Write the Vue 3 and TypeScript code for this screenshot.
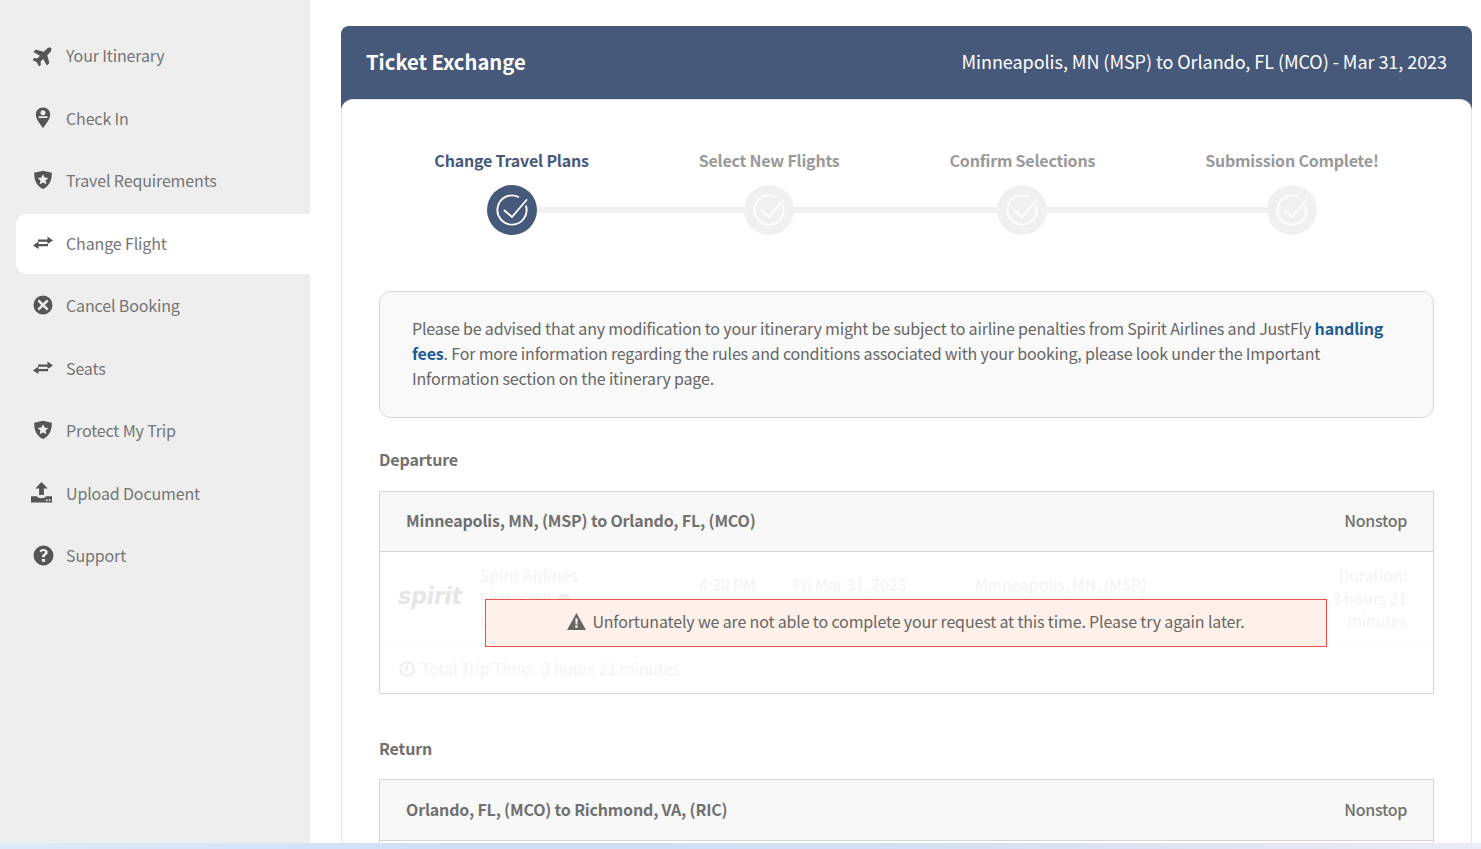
<script setup lang="ts">
type NavItem = { label: string; icon: string; active?: boolean }

const navItems: NavItem[] = [
  { label: 'Your Itinerary', icon: 'plane' },
  { label: 'Check In', icon: 'pin' },
  { label: 'Travel Requirements', icon: 'shield' },
  { label: 'Change Flight', icon: 'swap', active: true },
  { label: 'Cancel Booking', icon: 'cancel' },
  { label: 'Seats', icon: 'swap' },
  { label: 'Protect My Trip', icon: 'shield' },
  { label: 'Upload Document', icon: 'upload' },
  { label: 'Support', icon: 'help' },
]

const steps = [
  { label: 'Change Travel Plans', active: true },
  { label: 'Select New Flights', active: false },
  { label: 'Confirm Selections', active: false },
  { label: 'Submission Complete!', active: false },
]
</script>

<template>
  <div class="page">
    <aside class="sidebar">
      <a v-for="item in navItems" :key="item.label" :class="['nav_item', { active: item.active }]">
        <span class="nav_icon">
          <svg v-if="item.icon === 'plane'" width="23" height="23" viewBox="-22 -54 620 620">
            <path fill="#555" transform="rotate(-45 288 256)" d="M480 192H365.710L260.610 8.060A16.014 16.014 0 0 0 246.710 0h-65.500c-10.630 0-18.300 10.170-15.380 20.390L214.860 192H112l-43.200-57.600c-3.020-4.030-7.770-6.400-12.800-6.400H16.010C5.600 128-2.040 137.780.490 147.880L32 256 .490 364.120C-2.040 374.220 5.600 384 16.010 384H56c5.040 0 9.780-2.370 12.800-6.400L112 320h102.860l-49.030 171.600c-2.920 10.220 4.750 20.400 15.380 20.400h65.500c5.740 0 11.040-3.080 13.890-8.060L365.710 320H480c35.350 0 96-28.650 96-64s-60.650-64-96-64z" />
          </svg>
          <svg v-else-if="item.icon === 'pin'" width="22" height="22" viewBox="0 0 20 20">
            <path fill="#555" fill-rule="evenodd" d="M10 .500c-3.900 0-6.500 2.800-6.500 6.300 0 4 3.800 8.600 6.500 12.200 2.700-3.600 6.500-8.200 6.500-12.200 0-3.500-2.600-6.300-6.500-6.300zM10 3a2.300 2.300 0 1 1 0 4.600 2.300 2.300 0 0 1 0-4.600zM6 8.500h8V10H6z" />
          </svg>
          <svg v-else-if="item.icon === 'shield'" width="22" height="22" viewBox="0 0 20 20">
            <path fill="#555" fill-rule="evenodd" d="M10 1.500 2 3.400c-.2 6.300 1.800 11.800 8 14.800 6.200-3 8.200-8.500 8-14.800zM10 4.800l1.500 3 3.300.4-2.400 2.300.6 3.300-3-1.600-3 1.600.6-3.300-2.400-2.300 3.300-.4z" />
          </svg>
          <svg v-else-if="item.icon === 'swap'" width="20" height="20" viewBox="0 0 20 20">
            <path fill="#555" transform="translate(0 3)" d="M5 3.500h9.500V.5L20 4.500l-5.500 3.500V5.800H5zM15 8H5.500V5.500L0 9.500 5.500 13v-2.700H15z" />
          </svg>
          <svg v-else-if="item.icon === 'cancel'" width="20" height="20" viewBox="0 0 20 20">
            <path fill="#555" fill-rule="evenodd" d="M10 .500a9.500 9.500 0 1 0 0 19 9.500 9.500 0 0 0 0-19zM6.200 4.400 10 8.200l3.800-3.800 1.800 1.800L11.800 10l3.800 3.800-1.800 1.800L10 11.800l-3.800 3.800-1.800-1.800L8.200 10 4.400 6.200z" />
          </svg>
          <svg v-else-if="item.icon === 'upload'" class="upload_icon" width="23" height="21" viewBox="0 0 24 22">
            <path fill="#555" d="M12 0l6.500 6.800h-4v6.700h-5V6.800h-4zM1 15h6.200c.6 1.300 2 2 4.800 2s4.200-.7 4.800-2H23v6.500H1z" />
            <circle cx="17.500" cy="19" r="1" fill="#eee" />
            <circle cx="20.500" cy="19" r="1" fill="#eee" />
          </svg>
          <svg v-else width="21" height="21" viewBox="0 0 20 20">
            <path fill="#555" fill-rule="evenodd" d="M10 .500a9.500 9.500 0 1 0 0 19 9.500 9.500 0 0 0 0-19zM10 3.700c2.400 0 4 1.400 4 3.300 0 1.500-.9 2.200-1.800 2.800-.7.500-1 .8-1 1.400v.5H8.700v-.8c0-1.200.6-1.900 1.500-2.500.8-.5 1.200-.8 1.200-1.500 0-.7-.6-1.100-1.400-1.100-.9 0-1.500.5-2 1.300L6.100 5.600C7 4.400 8.200 3.700 10 3.700zM8.500 13.300h3v2.700h-3z" />
          </svg>
        </span>
        <span class="nav_label">{{ item.label }}</span>
      </a>
    </aside>

    <main class="content">
      <section class="card">
        <header class="card_head">
          <h1>Ticket Exchange</h1>
          <span>Minneapolis, MN (MSP) to Orlando, FL (MCO) - Mar 31, 2023</span>
        </header>

        <div class="card_body">
          <div class="steps_wrap">
            <div class="steps">
              <div class="track"></div>
              <div v-for="step in steps" :key="step.label" :class="['step', { active: step.active }]">
                <div class="step_label">{{ step.label }}</div>
                <div class="step_dot">
                  <svg width="34" height="34" viewBox="0 0 34 34" fill="none" stroke-width="1.900" stroke-linecap="round">
                    <path d="M31.100 13.200A14.600 14.600 0 1 1 23.200 3.800" />
                    <path d="M9.500 17.500 17 24 31.500 7" />
                  </svg>
                </div>
              </div>
            </div>
          </div>

          <div class="notice">
            Please be advised that any modification to your itinerary might be subject to airline penalties from Spirit Airlines and JustFly <a>handling</a> <a>fees</a>. For more information regarding the rules and conditions associated with your booking, please look under the Important Information section on the itinerary page.
          </div>

          <h2 class="leg_title">Departure</h2>
          <div class="leg">
            <div class="leg_head">
              <span>Minneapolis, MN, (MSP) to Orlando, FL, (MCO)</span>
              <span class="stops">Nonstop</span>
            </div>
            <div class="leg_body">
              <div class="faded">
                <div class="flight_row">
                  <div class="logo">spirit</div>
                  <div class="airline">
                    Spirit Airlines<br />
                    Flight 259
                    <svg width="14" height="14" viewBox="0 0 14 14" fill="#eeeeee"><circle cx="7" cy="7" r="6.500" /></svg><br />
                    Economy
                  </div>
                  <div class="time">4:20 PM</div>
                  <div class="date">Fri Mar 31, 2023</div>
                  <div class="city">Minneapolis, MN, (MSP)</div>
                  <div class="duration">Duration:<br />3 hours 21<br />minutes</div>
                </div>
                <div class="total">
                  <svg width="16" height="16" viewBox="0 0 16 16" fill="none" stroke="#eeeeee" stroke-width="2">
                    <circle cx="8" cy="8" r="6.800" />
                    <path d="M8 4v4.500H5" />
                  </svg>
                  <span>Total Trip Time:&nbsp; 3 hours 21 minutes</span>
                </div>
              </div>
              <div class="alert">
                <svg width="19" height="17" viewBox="0 0 19 17">
                  <path fill="#666" fill-rule="evenodd" d="M9.500 0 19 17H0zM8.300 5.500l.3 6h1.800l.3-6zM8.300 12.500v2.200h2.400v-2.200z" />
                </svg>
                <span>Unfortunately we are not able to complete your request at this time. Please try again later.</span>
              </div>
            </div>
          </div>

          <h2 class="leg_title return_title">Return</h2>
          <div class="leg">
            <div class="leg_head return_head">
              <span>Orlando, FL, (MCO) to Richmond, VA, (RIC)</span>
              <span class="stops">Nonstop</span>
            </div>
            <div class="leg_body"></div>
          </div>
        </div>
      </section>
    </main>

    <div class="bottom_strip"></div>
  </div>
</template>

<style>
html, body {
  margin: 0;
  height: 100%;
  overflow: hidden;
  background: #fff;
}
</style>

<style scoped>
.page {
  position: relative;
  display: flex;
  height: 849px;
  overflow: hidden;
  font-family: "Noto Sans CJK SC", "Noto Sans", sans-serif;
  font-size: 16px;
  letter-spacing: -0.14px;
  line-height: 25px;
  color: #666;
}

.sidebar {
  width: 294px;
  padding: 26px 0 0 16px;
  background: #eeeeee;
  flex-shrink: 0;
  display: flex;
  flex-direction: column;
  gap: 2.500px;
}

.nav_item {
  display: flex;
  align-items: center;
  height: 60px;
  border-radius: 10px 0 0 10px;
  color: #757575;
}

.nav_item.active {
  background: #fff;
}

.nav_label {
  margin-bottom: 0.200px;
}

.nav_icon {
  width: 50px;
  padding-left: 4px;
  box-sizing: border-box;
  display: flex;
  justify-content: center;
  align-items: center;
  height: 24px;
  margin-top: -2px;
}

.upload_icon {
  margin-left: -3px;
}

.content {
  flex: 1;
  padding: 26px 9px 0 31px;
  min-width: 0;
}

.card {
  background: #46597a;
  border-radius: 8px 8px 0 0;
}

.card_head {
  height: 73px;
  padding: 0 25px 2px;
  box-sizing: border-box;
  display: flex;
  align-items: center;
  justify-content: space-between;
  color: #fff;
  font-size: 18px;
  letter-spacing: -0.05px;
}

.card_head h1 {
  margin: 0;
  font-size: 20.200px;
  font-weight: 700;
  letter-spacing: 0;
}

.card_body {
  background: #fff;
  border: 1px solid #e4e4e4;
  border-bottom: 0;
  border-radius: 12px 12px 0 0;
  padding: 49px 37px 0;
  height: 761px;
}

.steps_wrap {
  display: flex;
  justify-content: center;
}

.steps {
  position: relative;
  display: flex;
  gap: 110px;
}

.track {
  position: absolute;
  left: 77px;
  right: 86px;
  top: 58px;
  height: 6px;
  background: #f0f0f0;
}

.step {
  display: flex;
  flex-direction: column;
  align-items: center;
  font-weight: 700;
  color: #999;
  position: relative;
  letter-spacing: -0.2px;
}

.step_label {
  line-height: 22px;
  white-space: nowrap;
}

.step.active {
  color: #46597a;
}

.step_dot {
  position: relative;
  z-index: 1;
  width: 50px;
  height: 50px;
  margin-top: 14px;
  border-radius: 50%;
  background: #f0f0f0;
  display: flex;
  align-items: center;
  justify-content: center;
  stroke: #fff;
}

.step.active .step_dot {
  background: #46597a;
}

.notice {
  margin-top: 56px;
  padding: 24px 32px 26px;
  background: #f9f9f9;
  border: 1px solid #d8d8d8;
  border-radius: 12px;
  color: #666;
  letter-spacing: -0.17px;
}

.notice a {
  color: #1d5c94;
  font-weight: 700;
}

.leg_title {
  margin: 29px 0 19px;
  font-size: 16px;
  line-height: 25px;
  font-weight: 700;
  color: #707070;
}

.return_title {
  margin: 42px 0 18px;
}

.leg {
  border: 1px solid #d5d5d5;
}

.leg_head {
  height: 60px;
  padding: 0 26px 2px;
  box-sizing: border-box;
  display: flex;
  align-items: center;
  justify-content: space-between;
  background: #f8f8f8;
  border-bottom: 1px solid #d5d5d5;
  font-weight: 700;
  color: #707070;
  letter-spacing: -0.18px;
}

.return_head {
  height: 61px;
}

.stops {
  font-weight: 500;
  letter-spacing: -0.3px;
}

.leg_body {
  position: relative;
  height: 141px;
}

.faded {
  color: #f3f3f3;
}

.flight_row {
  display: flex;
  height: 94px;
  padding: 12px 26px 0 18px;
  box-sizing: border-box;
  border-bottom: 1px solid #f8f8f8;
}

.logo {
  width: 82px;
  font-family: "DejaVu Sans", sans-serif;
  font-style: italic;
  font-weight: 700;
  font-size: 22.500px;
  letter-spacing: -0.5px;
  line-height: 42px;
  margin-top: 11px;
  color: #e6e6e6;
}

.airline {
  width: 219px;
  line-height: 22.500px;
}

.airline svg {
  vertical-align: -2px;
  margin-left: 2px;
}

.time {
  width: 94px;
  padding-top: 8px;
}

.date {
  width: 182px;
  padding-top: 8px;
}

.city {
  flex: 1;
  padding-top: 8px;
}

.duration {
  width: 90px;
  text-align: right;
  line-height: 22.500px;
  white-space: nowrap;
}

.total {
  display: flex;
  align-items: center;
  gap: 6px;
  padding: 10px 19px;
}

.alert {
  position: absolute;
  left: 105px;
  top: 47px;
  width: 842px;
  height: 48px;
  box-sizing: border-box;
  padding-bottom: 3px;
  display: flex;
  align-items: center;
  justify-content: center;
  gap: 6px;
  background: #fff1e9;
  border: 1px solid #e8504a;
  color: #666;
  letter-spacing: -0.15px;
}

.bottom_strip {
  position: absolute;
  left: 0;
  right: 0;
  bottom: 0;
  height: 6px;
  background: linear-gradient(90deg, #dfeaf8, #cfdff6 30%, #d3dff3 60%, #e3e6f3 85%, #e9edf6);
}
</style>
